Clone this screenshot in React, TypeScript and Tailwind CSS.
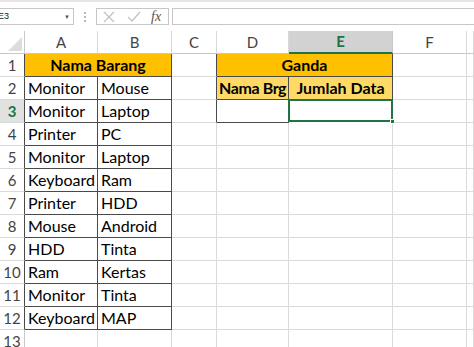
import React from "react";

const cols = ["A", "B", "C", "D", "E", "F", ""];

const data: [string, string][] = [
    ["Monitor", "Mouse"],
    ["Monitor", "Laptop"],
    ["Printer", "PC"],
    ["Monitor", "Laptop"],
    ["Keyboard", "Ram"],
    ["Printer", "HDD"],
    ["Mouse", "Android"],
    ["HDD", "Tinta"],
    ["Ram", "Kertas"],
    ["Monitor", "Tinta"],
    ["Keyboard", "MAP"],
];

const grid = "border-r border-b border-r-[#dadada] border-b-[#dadada]";

function RowHead({n, dark, active}: {n: number; dark?: boolean; active?: boolean}) {
    return (
        <div
            className={`h-[23px] flex items-center justify-center text-[15px] border-b border-r border-b-[#dadada] ${
                dark ? "border-r-[#4a4a4a]" : "border-r-[#c8c8c8]"
            } ${active ? "bg-[#e1e1e1] text-[#217346] font-bold" : "text-[#444]"}`}
        >
            {n}
        </div>
    );
}

function Cell({
    children,
    className = "",
}: {
    children?: React.ReactNode;
    className?: string;
}) {
    return (
        <div className={`h-[23px] flex items-end pb-[1px] px-[3px] text-[16px] leading-[20px] text-black whitespace-nowrap overflow-visible ${className}`}>
            {children}
        </div>
    );
}

export default function App() {
    return (
        <div className="w-[474px] h-[347px] overflow-hidden bg-white font-['Lato',sans-serif]">
            {/* formula bar */}
            <div className="h-[31px] border-t-[2px] border-[#e6e6e6]">
                <div className="flex items-center h-[17px] mt-[6px]">
                    <div className="w-[74px] h-[17px] border border-[#c6c6c6] border-l-0 flex items-center justify-between pr-[3px]">
                        <span className="text-[9px] text-[#222] -ml-[2px] font-['Liberation_Sans',sans-serif]">E3</span>
                        <span className="text-[6px] text-[#555]">▼</span>
                    </div>
                    <div className="w-[22px] flex flex-col items-center gap-[2px]">
                        <span className="w-[2px] h-[2px] bg-[#b8b8b8]" />
                        <span className="w-[2px] h-[2px] bg-[#b8b8b8]" />
                        <span className="w-[2px] h-[2px] bg-[#b8b8b8]" />
                    </div>
                    <div className="w-[73px] h-[17px] border border-[#c6c6c6] flex items-center">
                        <svg width="14" height="12" viewBox="0 0 14 12" className="ml-[5px]">
                            <path d="M2 1 L12 11 M12 1 L2 11" stroke="#c4c4c4" strokeWidth="1.4" />
                        </svg>
                        <svg width="14" height="12" viewBox="0 0 14 12" className="ml-[11px]">
                            <path d="M1 6 L5 10 L13 1" stroke="#c4c4c4" strokeWidth="1.4" fill="none" />
                        </svg>
                        <span className="ml-[10px] text-[14px] italic text-[#555] font-['Liberation_Serif',serif]">fx</span>
                    </div>
                    <div className="flex-1 h-[17px] ml-[3px] border border-[#c6c6c6] border-r-0" />
                </div>
            </div>

            {/* sheet */}
            <div className="grid grid-cols-[25px_73px_74px_45px_72px_104px_74px_1fr]">
                {/* column header */}
                <div className="h-[23px] border-r border-b border-[#c8c8c8] flex items-end justify-end p-[2px]">
                    <div className="w-0 h-0 border-l-[14px] border-l-transparent border-b-[14px] border-b-[#dcdcdc]" />
                </div>
                {cols.map((c, i) =>
                    c === "E" ? (
                        <div
                            key={i}
                            className="h-[23px] flex items-center justify-center text-[15px] font-bold text-[#217346] bg-[#d2d2d2] border-r border-r-[#c8c8c8] border-b-2 border-b-[#217346]"
                        >
                            {c}
                        </div>
                    ) : (
                        <div
                            key={i}
                            className="h-[23px] flex items-center justify-center text-[15px] text-[#444] border-r border-b border-r-[#d8d8d8] border-b-[#c8c8c8]"
                        >
                            {c}
                        </div>
                    )
                )}

                {/* row 1 */}
                <RowHead n={1} dark />
                <Cell className="col-span-2 justify-center font-bold bg-[#ffc000] border-r border-b border-[#4a4a4a]">Nama Barang</Cell>
                <Cell className="border-b border-r border-b-[#dadada] border-r-[#4a4a4a]" />
                <Cell className="col-span-2 justify-center font-bold bg-[#ffc000] border-r border-b border-[#4a4a4a]">Ganda</Cell>
                <Cell className={grid} />
                <Cell className={grid} />

                {/* rows 2..12 */}
                {data.map(([a, b], i) => {
                    const n = i + 2;
                    return (
                        <React.Fragment key={n}>
                            <RowHead n={n} dark active={n === 3} />
                            <Cell className="border-r border-b border-[#4a4a4a]">{a}</Cell>
                            <Cell className="border-r border-b border-[#4a4a4a]">{b}</Cell>
                            <Cell className={n <= 3 ? "border-b border-r border-b-[#dadada] border-r-[#4a4a4a]" : grid} />
                            {n === 2 && (
                                <>
                                    <Cell className="font-bold tracking-[-0.4px] !px-[2px] bg-[#ffd966] border-r border-b border-[#4a4a4a]">Nama Brg</Cell>
                                    <Cell className="justify-center font-bold bg-[#ffd966] border-r border-b border-[#4a4a4a]">Jumlah Data</Cell>
                                </>
                            )}
                            {n === 3 && (
                                <>
                                    <Cell className="border-r border-b border-[#4a4a4a]" />
                                    <div className="h-[23px] relative border-2 border-[#217346] -mt-[1px] -ml-[1px] w-[105px]">
                                        <span className="absolute -right-[4px] -bottom-[4px] w-[5px] h-[5px] bg-[#217346] border border-white" />
                                    </div>
                                </>
                            )}
                            {n > 3 && (
                                <>
                                    <Cell className={grid} />
                                    <Cell className={grid} />
                                </>
                            )}
                            <Cell className={grid} />
                            <Cell className={grid} />
                        </React.Fragment>
                    );
                })}

                {/* row 13 */}
                <RowHead n={13} />
                <Cell className={grid} />
                <Cell className={grid} />
                <Cell className={grid} />
                <Cell className={grid} />
                <Cell className={grid} />
                <Cell className={grid} />
                <Cell className={grid} />
            </div>
        </div>
    );
}
